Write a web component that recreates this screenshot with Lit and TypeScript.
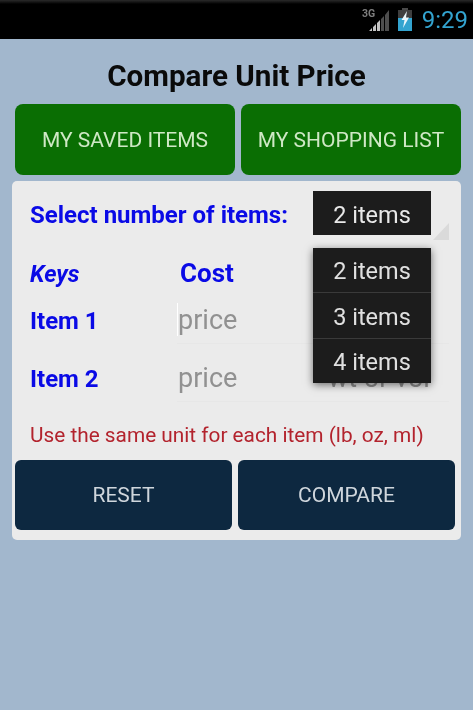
import { LitElement, html, css } from "lit";
import { customElement } from "lit/decorators.js";

@customElement("app-root")
export class AppRoot extends LitElement {
  static styles = css`
    :host { display: block; width: 473px; height: 710px; overflow: hidden; background: #a2b7cd; font-family: Roboto, "Liberation Sans", sans-serif; position: relative; filter: blur(0.35px); }
    .status { height: 39px; background: linear-gradient(#2a2a2a 0, #000 4px); display: flex; justify-content: flex-end; align-items: center; padding-right: 5px; box-sizing: border-box; }
    .status svg { display: block; }
    .sig { margin-right: 8px; }
    .bat { margin-right: 10px; }
    .time { color: #33a4d0; font-size: 24px; line-height: 39px; padding-top: 2px; }
    h1 { margin: 0; height: 65px; display: flex; align-items: center; justify-content: center; font-size: 29.600px; font-weight: 700; color: #0a0a0a; padding-top: 9px; box-sizing: border-box; }
    .btns { display: grid; grid-template-columns: 220px 220px; gap: 6px; padding-left: 15px; }
    .btn { display: flex; align-items: center; justify-content: center; height: 71px; border-radius: 8px; font-size: 21px; }
    .green { background: #0a6e03; color: #cfe8c5; }
    .navy { background: #0d2840; color: #cfd6dc; font-size: 21px; height: 70px; border-radius: 6px; }
    .card { margin: 6px 12px 0; height: 359px; background: #ebebeb; border-radius: 5px; box-sizing: border-box; display: flex; flex-direction: column; position: relative; }
    .sel-row { display: flex; align-items: center; height: 66px; padding: 2px 0 0 18px; box-sizing: border-box; }
    .sel-label { font-size: 24px; font-weight: 700; color: #0a0ae6; width: 283px; flex: none; }
    .spin { width: 118px; height: 44px; margin-bottom: 4px; padding-top: 3px; box-sizing: border-box; background: #1c1c1c; color: #e8e8e8; font-size: 23.500px; display: flex; align-items: center; justify-content: center; }
    .corner { position: absolute; left: 421px; top: 42px; width: 16px; height: 17px; background: #dadada; clip-path: polygon(100% 0, 100% 100%, 0 100%); }
    .grid { display: grid; grid-template-columns: 147px 150px 1fr; grid-template-rows: 45px 58px 58px; padding: 0 12px 0 18px; color: #0a0ae6; }
    .head { height: 45px; display: flex; align-items: center; padding-top: 9px; box-sizing: border-box; }
    .keys { font-size: 23.500px; font-weight: 700; font-style: italic; }
    .cost { font-size: 26px; font-weight: 700; padding-left: 3px; padding-top: 7px; }
    .item { font-size: 24px; font-weight: 700; height: 58px; display: flex; align-items: center; }
    .field { height: 52px; display: flex; align-items: center; font-size: 27px; color: #919191; border-bottom: 1px solid #e7e7e7; box-sizing: border-box; padding: 4px 0 0 1px; white-space: nowrap; }
    .cursor { display: block; height: 33px; line-height: 35px; border-left: 1px solid #fff; margin-left: -1px; padding-left: 0; }
    .hint { font-size: 20.800px; color: #b3232d; padding: 2px 0 0 18px; height: 52px; box-sizing: border-box; display: flex; align-items: center; }
    .btns2 { display: grid; grid-template-columns: 217px 217px; gap: 6px; padding-left: 3px; }
    .menu { position: absolute; left: 313px; top: 248px; width: 118px; background: #1c1c1c; box-shadow: 0 2px 8px rgba(0,0,0,.55); }
    .opt { height: 46px; padding-top: 2px; display: flex; align-items: center; justify-content: center; color: #e0e0e0; font-size: 23.500px; border-top: 1px solid #3a3a3a; box-sizing: border-box; }
    .opt:first-child { border-top: 0; height: 44px; }
    .opt:last-child { height: 45px; }
  `;

  render() {
    return html`
      <div class="status">
        <svg class="sig" width="28" height="26" viewBox="0 0 28 26">
          <text x="0" y="10" font-size="10.500" font-weight="700" fill="#7d7d7d" font-family="Roboto">3G</text>
          <path d="M7 24 10 21V24zM11 24V20L14 17V24zM15 24V16L18 13V24z" fill="#c4c4c4"/>
          <path d="M19 24V12L22 9V24zM23 24V8L27 3V24z" fill="#4e4e4e"/>
        </svg>
        <svg class="bat" width="14" height="23" viewBox="0 0 14 23">
          <rect x="4" y="0" width="6" height="2" fill="#4a4a4a"/>
          <rect x="0" y="2" width="14" height="21" fill="#3f3f3f"/>
          <rect x="0" y="10" width="14" height="13" fill="#33a4d0"/>
          <path d="M9 3 3.500 12H6.500L5 20 11 9.500H8z" fill="#eaf6fb"/>
        </svg>
        <span class="time">9:29</span>
      </div>
      <h1>Compare Unit Price</h1>
      <div class="btns">
        <div class="btn green">MY SAVED ITEMS</div>
        <div class="btn green">MY SHOPPING LIST</div>
      </div>
      <div class="card">
        <div class="sel-row">
          <span class="sel-label">Select number of items:</span>
          <div class="spin">2 items</div>
        </div>
        <div class="corner"></div>
        <div class="grid">
          <div class="head keys">Keys</div><div class="head cost">Cost</div><div class="head"></div>
          <div class="item">Item 1</div><div class="field"><span class="cursor">price</span></div><div class="field"></div>
          <div class="item">Item 2</div><div class="field">price</div><div class="field">wt or vol</div>
        </div>
        <div class="hint">Use the same unit for each item (lb, oz, ml)</div>
        <div class="btns2">
          <div class="btn navy">RESET</div>
          <div class="btn navy">COMPARE</div>
        </div>
      </div>
      <div class="menu">
        <div class="opt">2 items</div>
        <div class="opt">3 items</div>
        <div class="opt">4 items</div>
      </div>
    `;
  }
}
